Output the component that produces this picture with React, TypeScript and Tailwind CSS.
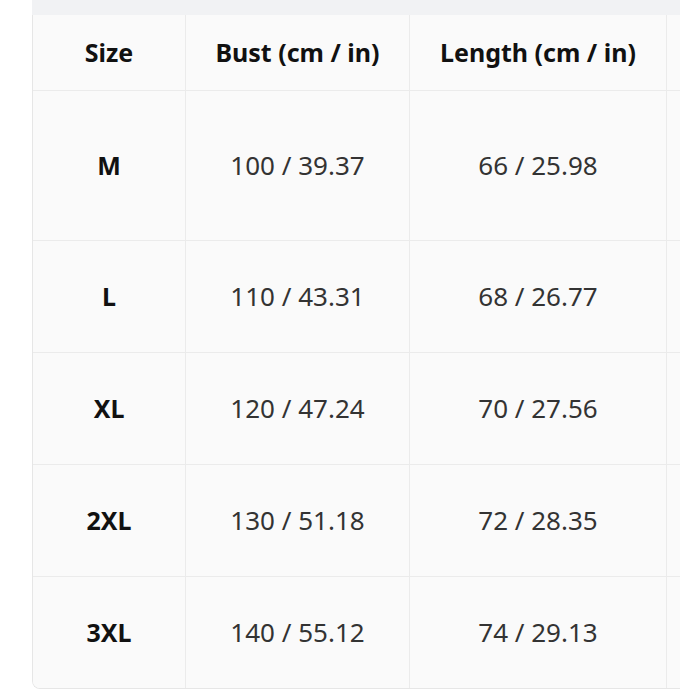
const rows = [
  { size: "M", bust: "100 / 39.37", length: "66 / 25.98", h: "h-[150px]" },
  { size: "L", bust: "110 / 43.31", length: "68 / 26.77", h: "h-[112px]" },
  { size: "XL", bust: "120 / 47.24", length: "70 / 27.56", h: "h-[112px]" },
  { size: "2XL", bust: "130 / 51.18", length: "72 / 28.35", h: "h-[112px]" },
  { size: "3XL", bust: "140 / 55.12", length: "74 / 29.13", h: "h-[111px]" },
]

const App = () => {
  return (
    <div className="w-[700px] h-[700px] bg-white overflow-hidden" style={{ fontFamily: '"Noto Sans", "Open Sans", sans-serif' }}>
      <div className="ml-[32px] w-[648px] h-[15px] bg-[#f1f2f4]" />
      <div className="ml-[32px] w-[648px] overflow-hidden border-l border-b border-[#e6e6e6] rounded-bl-[8px]">
        <table className="w-[760px] border-separate border-spacing-0 bg-[#fafafa] table-fixed">
          <colgroup>
            <col className="w-[153px]" />
            <col className="w-[224px]" />
            <col className="w-[257px]" />
            <col className="w-[126px]" />
          </colgroup>
          <thead>
            <tr className="h-[76px]">
              <th className="border-r border-b border-[#ebebeb] text-[25px] font-bold text-[#111]">Size</th>
              <th className="border-r border-b border-[#ebebeb] text-[25px] font-bold text-[#111]">Bust (cm / in)</th>
              <th className="border-r border-b border-[#ebebeb] text-[25px] font-bold text-[#111]">Length (cm / in)</th>
              <th className="border-b border-[#ebebeb]"></th>
            </tr>
          </thead>
          <tbody>
            {rows.map((r, i) => {
              const b = i < rows.length - 1 ? "border-b" : ""
              return (
                <tr key={r.size} className={r.h}>
                  <td className={`border-r border-[#ebebeb] text-center text-[25px] font-bold text-[#111] ${b}`}>{r.size}</td>
                  <td className={`border-r border-[#ebebeb] text-center text-[26px] text-[#333] ${b}`}>{r.bust}</td>
                  <td className={`border-r border-[#ebebeb] text-center text-[26px] text-[#333] ${b}`}>{r.length}</td>
                  <td className={`border-[#ebebeb] ${b}`}></td>
                </tr>
              )
            })}
          </tbody>
        </table>
      </div>
    </div>
  )
}

export default App
